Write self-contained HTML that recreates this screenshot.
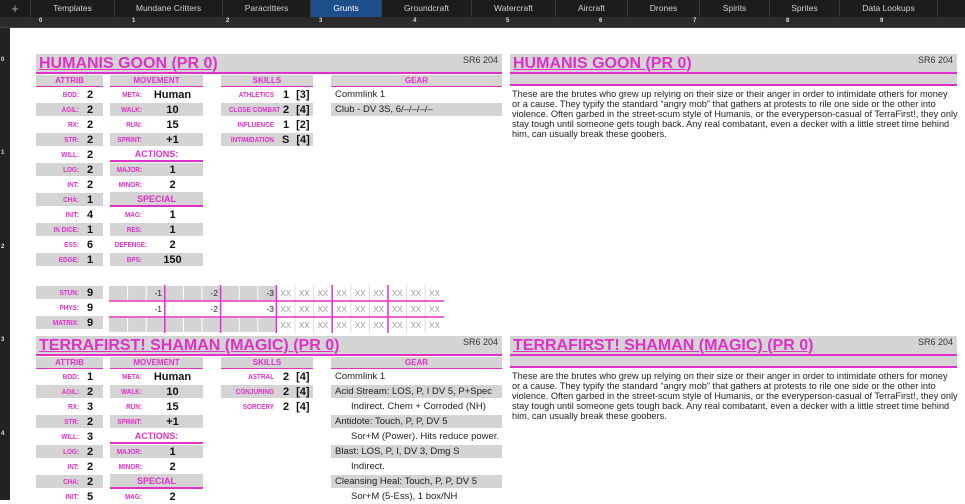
<!DOCTYPE html>
<html><head><meta charset="utf-8"><style>
*{box-sizing:border-box;margin:0;padding:0}
body{width:965px;height:500px;overflow:hidden;background:#fff;font-family:"Liberation Sans",Arial,sans-serif;position:relative}
.abs{position:absolute}
#top{left:0;top:0;width:965px;height:17px;background:#1c1c1c}
.tab{position:absolute;top:0;height:17px;line-height:17px;font-size:8.5px;color:#d0d0d0;text-align:center;border-right:1px solid #3a3a3a}
#ruler{left:0;top:17px;width:965px;height:11px;background:#2b2b2b;border-bottom:1px solid #444}
#lrul{left:0;top:28px;width:10px;height:472px;background:#222}
.rn{position:absolute;font-size:6px;color:#ddd;font-weight:bold}
.hdr{position:absolute;height:20px;background:#d4d4d4;border-bottom:2px solid #e030c8}
.ttl{position:absolute;left:3px;top:1px;font-size:16px;font-weight:bold;color:#e030c8;text-decoration:underline;white-space:nowrap}
.src{position:absolute;right:4px;top:1px;font-size:9px;color:#333}
.ch{position:absolute;height:13px;background:#d4d4d4;border-bottom:2px solid #e030c8;font-size:8px;font-weight:bold;color:#e030c8;text-align:center;line-height:12px}
.col{position:absolute}
.r{height:15px;position:relative;border-top:1px solid #fff;border-bottom:1px solid #fff;display:flex;align-items:center}
.g{background:#d4d4d4}
.l{font-size:7.5px;font-weight:bold;color:#e030c8;text-align:right;transform:scaleX(.85);transform-origin:right;white-space:nowrap}
.v{font-size:11px;font-weight:bold;color:#111}
.sh{height:15px;border-bottom:2px solid #e030c8;font-size:9px;font-weight:bold;color:#e030c8;text-align:center;line-height:14px}
.gear{font-size:9.5px;color:#222;padding-left:4px;white-space:nowrap}
.ind{padding-left:20px}
.desc{position:absolute;font-size:9.2px;line-height:10px;color:#222;white-space:nowrap}
</style></head><body>
<div id="top" class="abs">
<div class="tab" style="left:0;width:31px;font-size:13px;color:#aaa">+</div>
<div class="tab" style="left:31px;width:84px">Templates</div>
<div class="tab" style="left:115px;width:108px">Mundane Critters</div>
<div class="tab" style="left:223px;width:88px">Paracritters</div>
<div class="tab" style="left:311px;width:71px;background:#1c4f8c;color:#fff">Grunts</div>
<div class="tab" style="left:382px;width:90px">Groundcraft</div>
<div class="tab" style="left:472px;width:84px">Watercraft</div>
<div class="tab" style="left:556px;width:72px">Aircraft</div>
<div class="tab" style="left:628px;width:72px">Drones</div>
<div class="tab" style="left:700px;width:70px">Spirits</div>
<div class="tab" style="left:770px;width:70px">Sprites</div>
<div class="tab" style="left:840px;width:98px">Data Lookups</div>
</div>
<div id="ruler" class="abs">
<span class="rn" style="left:39px;top:1px">0</span><span class="rn" style="left:132px;top:1px">1</span><span class="rn" style="left:226px;top:1px">2</span><span class="rn" style="left:319px;top:1px">3</span><span class="rn" style="left:413px;top:1px">4</span><span class="rn" style="left:506px;top:1px">5</span><span class="rn" style="left:599px;top:1px">6</span><span class="rn" style="left:693px;top:1px">7</span><span class="rn" style="left:786px;top:1px">8</span><span class="rn" style="left:880px;top:1px">9</span>
</div>
<div id="lrul" class="abs">
<span class="rn" style="left:1px;top:29px">0</span><span class="rn" style="left:1px;top:122px">1</span><span class="rn" style="left:1px;top:216px">2</span><span class="rn" style="left:1px;top:309px">3</span><span class="rn" style="left:1px;top:403px">4</span>
</div>

<!-- BLOCK 1 -->
<div class="hdr" style="left:36px;top:54px;width:466px"><div class="ttl">HUMANIS GOON (PR 0)</div><div class="src">SR6 204</div></div>
<div class="ch" style="left:36px;top:75px;width:67px">ATTRIB</div>
<div class="ch" style="left:110px;top:75px;width:93px">MOVEMENT</div>
<div class="ch" style="left:221px;top:75px;width:92px">SKILLS</div>
<div class="ch" style="left:331px;top:75px;width:171px">GEAR</div>

<div class="col" style="left:36px;top:87px;width:67px">
<div class="r"><span class="l" style="width:43px">BOD:</span><span class="v" style="margin-left:8px">2</span></div>
<div class="r g"><span class="l" style="width:43px">AGIL:</span><span class="v" style="margin-left:8px">2</span></div>
<div class="r"><span class="l" style="width:43px">RX:</span><span class="v" style="margin-left:8px">2</span></div>
<div class="r g"><span class="l" style="width:43px">STR:</span><span class="v" style="margin-left:8px">2</span></div>
<div class="r"><span class="l" style="width:43px">WILL:</span><span class="v" style="margin-left:8px">2</span></div>
<div class="r g"><span class="l" style="width:43px">LOG:</span><span class="v" style="margin-left:8px">2</span></div>
<div class="r"><span class="l" style="width:43px">INT:</span><span class="v" style="margin-left:8px">2</span></div>
<div class="r g"><span class="l" style="width:43px">CHA:</span><span class="v" style="margin-left:8px">1</span></div>
<div class="r"><span class="l" style="width:43px">INIT:</span><span class="v" style="margin-left:8px">4</span></div>
<div class="r g"><span class="l" style="width:43px">IN DICE:</span><span class="v" style="margin-left:8px">1</span></div>
<div class="r"><span class="l" style="width:43px">ESS:</span><span class="v" style="margin-left:8px">6</span></div>
<div class="r g"><span class="l" style="width:43px">EDGE:</span><span class="v" style="margin-left:8px">1</span></div>
</div>
<div class="col" style="left:110px;top:87px;width:93px">
<div class="r"><span class="l" style="width:32px">META:</span><span class="v" style="width:61px;text-align:center">Human</span></div>
<div class="r g"><span class="l" style="width:32px">WALK:</span><span class="v" style="width:61px;text-align:center">10</span></div>
<div class="r"><span class="l" style="width:32px">RUN:</span><span class="v" style="width:61px;text-align:center">15</span></div>
<div class="r g"><span class="l" style="width:32px">SPRINT:</span><span class="v" style="width:61px;text-align:center">+1</span></div>
<div class="sh">ACTIONS:</div>
<div class="r g"><span class="l" style="width:32px">MAJOR:</span><span class="v" style="width:61px;text-align:center">1</span></div>
<div class="r"><span class="l" style="width:32px">MINOR:</span><span class="v" style="width:61px;text-align:center">2</span></div>
<div class="sh g">SPECIAL</div>
<div class="r"><span class="l" style="width:32px">MAG:</span><span class="v" style="width:61px;text-align:center">1</span></div>
<div class="r g"><span class="l" style="width:32px">RES:</span><span class="v" style="width:61px;text-align:center">1</span></div>
<div class="r"><span class="l" style="width:32px">DEFENSE:</span><span class="v" style="width:61px;text-align:center">2</span></div>
<div class="r g"><span class="l" style="width:32px">BPS:</span><span class="v" style="width:61px;text-align:center">150</span></div>
</div>
<div class="col" style="left:221px;top:87px;width:92px">
<div class="r"><span class="l" style="width:53px">ATHLETICS</span><span class="v" style="margin-left:9px">1</span><span class="v" style="margin-left:7px">[3]</span></div>
<div class="r g"><span class="l" style="width:53px">CLOSE COMBAT</span><span class="v" style="margin-left:9px">2</span><span class="v" style="margin-left:7px">[4]</span></div>
<div class="r"><span class="l" style="width:53px">INFLUENCE</span><span class="v" style="margin-left:9px">1</span><span class="v" style="margin-left:7px">[2]</span></div>
<div class="r g"><span class="l" style="width:53px">INTIMIDATION</span><span class="v" style="margin-left:8px">S</span><span class="v" style="margin-left:7px">[4]</span></div>
</div>
<div class="col" style="left:331px;top:87px;width:171px">
<div class="r gear">Commlink 1</div>
<div class="r g gear">Club - DV 3S, 6/–/–/–/–</div>
</div>

<div class="hdr" style="left:510px;top:54px;width:447px"><div class="ttl">HUMANIS GOON (PR 0)</div><div class="src">SR6 204</div></div>
<div class="abs" style="left:510px;top:74px;width:447px;height:12px;background:#d4d4d4;border-bottom:2px solid #e030c8"></div>
<div class="desc" style="left:512px;top:89px">These are the brutes who grew up relying on their size or their anger in order to intimidate others for money<br>or a cause. They typify the standard “angry mob” that gathers at protests to rile one side or the other into<br>violence. Often garbed in the street-scum style of Humanis, or the everyperson-casual of TerraFirst!, they only<br>stay tough until someone gets tough back. Any real combatant, even a decker with a little street time behind<br>him, can usually break these goobers.</div>

<!-- condition -->
<div class="col" style="left:36px;top:285px;width:67px">
<div class="r g"><span class="l" style="width:43px">STUN:</span><span class="v" style="margin-left:8px">9</span></div>
<div class="r"><span class="l" style="width:43px">PHYS:</span><span class="v" style="margin-left:8px">9</span></div>
<div class="r g"><span class="l" style="width:43px">MATRIX:</span><span class="v" style="margin-left:8px">9</span></div>
</div>
<svg class="abs" style="left:109px;top:285px" width="336" height="48">
<rect x="0" y="1" width="167" height="14" fill="#d4d4d4"/>
<rect x="0" y="33" width="167" height="14" fill="#d4d4d4"/>
<g stroke="#fff" stroke-width="1">
<line x1="18.6" y1="0" x2="18.6" y2="48"/><line x1="37.2" y1="0" x2="37.2" y2="48"/><line x1="74.4" y1="0" x2="74.4" y2="48"/><line x1="93" y1="0" x2="93" y2="48"/><line x1="130.2" y1="0" x2="130.2" y2="48"/><line x1="148.8" y1="0" x2="148.8" y2="48"/>
</g>
<g stroke="#ddd" stroke-width="1">
<line x1="186" y1="0" x2="186" y2="48"/><line x1="204.6" y1="0" x2="204.6" y2="48"/><line x1="241.8" y1="0" x2="241.8" y2="48"/><line x1="260.4" y1="0" x2="260.4" y2="48"/><line x1="297.6" y1="0" x2="297.6" y2="48"/><line x1="316.2" y1="0" x2="316.2" y2="48"/>
</g>
<g stroke="#e030c8" stroke-width="1.5">
<line x1="55.8" y1="0" x2="55.8" y2="48"/><line x1="111.6" y1="0" x2="111.6" y2="48"/><line x1="167.4" y1="0" x2="167.4" y2="48"/><line x1="223.2" y1="0" x2="223.2" y2="48"/><line x1="279" y1="0" x2="279" y2="48"/>
<line x1="0" y1="16" x2="335" y2="16"/><line x1="0" y1="32" x2="335" y2="32"/>
</g>
<g font-family="Liberation Sans" font-size="8.5" fill="#222" text-anchor="end">
<text x="53" y="11">-1</text><text x="109" y="11">-2</text><text x="165" y="11">-3</text>
<text x="53" y="27">-1</text><text x="109" y="27">-2</text><text x="165" y="27">-3</text>
</g>
<g font-family="Liberation Sans" font-size="8" fill="#999" text-anchor="middle">
<text x="176.7" y="11">XX</text><text x="195.3" y="11">XX</text><text x="213.9" y="11">XX</text><text x="232.5" y="11">XX</text><text x="251.1" y="11">XX</text><text x="269.7" y="11">XX</text><text x="288.3" y="11">XX</text><text x="306.9" y="11">XX</text><text x="325.5" y="11">XX</text>
<text x="176.7" y="27">XX</text><text x="195.3" y="27">XX</text><text x="213.9" y="27">XX</text><text x="232.5" y="27">XX</text><text x="251.1" y="27">XX</text><text x="269.7" y="27">XX</text><text x="288.3" y="27">XX</text><text x="306.9" y="27">XX</text><text x="325.5" y="27">XX</text>
<text x="176.7" y="43">XX</text><text x="195.3" y="43">XX</text><text x="213.9" y="43">XX</text><text x="232.5" y="43">XX</text><text x="251.1" y="43">XX</text><text x="269.7" y="43">XX</text><text x="288.3" y="43">XX</text><text x="306.9" y="43">XX</text><text x="325.5" y="43">XX</text>
</g>
</svg>

<!-- BLOCK 2 -->
<div class="hdr" style="left:36px;top:336px;width:466px"><div class="ttl">TERRAFIRST! SHAMAN (MAGIC) (PR 0)</div><div class="src">SR6 204</div></div>
<div class="ch" style="left:36px;top:357px;width:67px">ATTRIB</div>
<div class="ch" style="left:110px;top:357px;width:93px">MOVEMENT</div>
<div class="ch" style="left:221px;top:357px;width:92px">SKILLS</div>
<div class="ch" style="left:331px;top:357px;width:171px">GEAR</div>

<div class="col" style="left:36px;top:369px;width:67px">
<div class="r"><span class="l" style="width:43px">BOD:</span><span class="v" style="margin-left:8px">1</span></div>
<div class="r g"><span class="l" style="width:43px">AGIL:</span><span class="v" style="margin-left:8px">2</span></div>
<div class="r"><span class="l" style="width:43px">RX:</span><span class="v" style="margin-left:8px">3</span></div>
<div class="r g"><span class="l" style="width:43px">STR:</span><span class="v" style="margin-left:8px">2</span></div>
<div class="r"><span class="l" style="width:43px">WILL:</span><span class="v" style="margin-left:8px">3</span></div>
<div class="r g"><span class="l" style="width:43px">LOG:</span><span class="v" style="margin-left:8px">2</span></div>
<div class="r"><span class="l" style="width:43px">INT:</span><span class="v" style="margin-left:8px">2</span></div>
<div class="r g"><span class="l" style="width:43px">CHA:</span><span class="v" style="margin-left:8px">2</span></div>
<div class="r"><span class="l" style="width:43px">INIT:</span><span class="v" style="margin-left:8px">5</span></div>
</div>
<div class="col" style="left:110px;top:369px;width:93px">
<div class="r"><span class="l" style="width:32px">META:</span><span class="v" style="width:61px;text-align:center">Human</span></div>
<div class="r g"><span class="l" style="width:32px">WALK:</span><span class="v" style="width:61px;text-align:center">10</span></div>
<div class="r"><span class="l" style="width:32px">RUN:</span><span class="v" style="width:61px;text-align:center">15</span></div>
<div class="r g"><span class="l" style="width:32px">SPRINT:</span><span class="v" style="width:61px;text-align:center">+1</span></div>
<div class="sh">ACTIONS:</div>
<div class="r g"><span class="l" style="width:32px">MAJOR:</span><span class="v" style="width:61px;text-align:center">1</span></div>
<div class="r"><span class="l" style="width:32px">MINOR:</span><span class="v" style="width:61px;text-align:center">2</span></div>
<div class="sh g">SPECIAL</div>
<div class="r"><span class="l" style="width:32px">MAG:</span><span class="v" style="width:61px;text-align:center">2</span></div>
</div>
<div class="col" style="left:221px;top:369px;width:92px">
<div class="r"><span class="l" style="width:53px">ASTRAL</span><span class="v" style="margin-left:9px">2</span><span class="v" style="margin-left:7px">[4]</span></div>
<div class="r g"><span class="l" style="width:53px">CONJURING</span><span class="v" style="margin-left:9px">2</span><span class="v" style="margin-left:7px">[4]</span></div>
<div class="r"><span class="l" style="width:53px">SORCERY</span><span class="v" style="margin-left:9px">2</span><span class="v" style="margin-left:7px">[4]</span></div>
</div>
<div class="col" style="left:331px;top:369px;width:171px">
<div class="r gear">Commlink 1</div>
<div class="r g gear">Acid Stream: LOS, P, I DV 5, P+Spec</div>
<div class="r gear ind">Indirect. Chem + Corroded (NH)</div>
<div class="r g gear">Antidote: Touch, P, P, DV 5</div>
<div class="r gear ind">Sor+M (Power). Hits reduce power.</div>
<div class="r g gear">Blast: LOS, P, I, DV 3, Dmg S</div>
<div class="r gear ind">Indirect.</div>
<div class="r g gear">Cleansing Heal: Touch, P, P, DV 5</div>
<div class="r gear ind">Sor+M (5-Ess), 1 box/NH</div>
</div>

<div class="hdr" style="left:510px;top:336px;width:447px"><div class="ttl">TERRAFIRST! SHAMAN (MAGIC) (PR 0)</div><div class="src">SR6 204</div></div>
<div class="abs" style="left:510px;top:356px;width:447px;height:12px;background:#d4d4d4;border-bottom:2px solid #e030c8"></div>
<div class="desc" style="left:512px;top:371px">These are the brutes who grew up relying on their size or their anger in order to intimidate others for money<br>or a cause. They typify the standard “angry mob” that gathers at protests to rile one side or the other into<br>violence. Often garbed in the street-scum style of Humanis, or the everyperson-casual of TerraFirst!, they only<br>stay tough until someone gets tough back. Any real combatant, even a decker with a little street time behind<br>him, can usually break these goobers.</div>
</body></html>
